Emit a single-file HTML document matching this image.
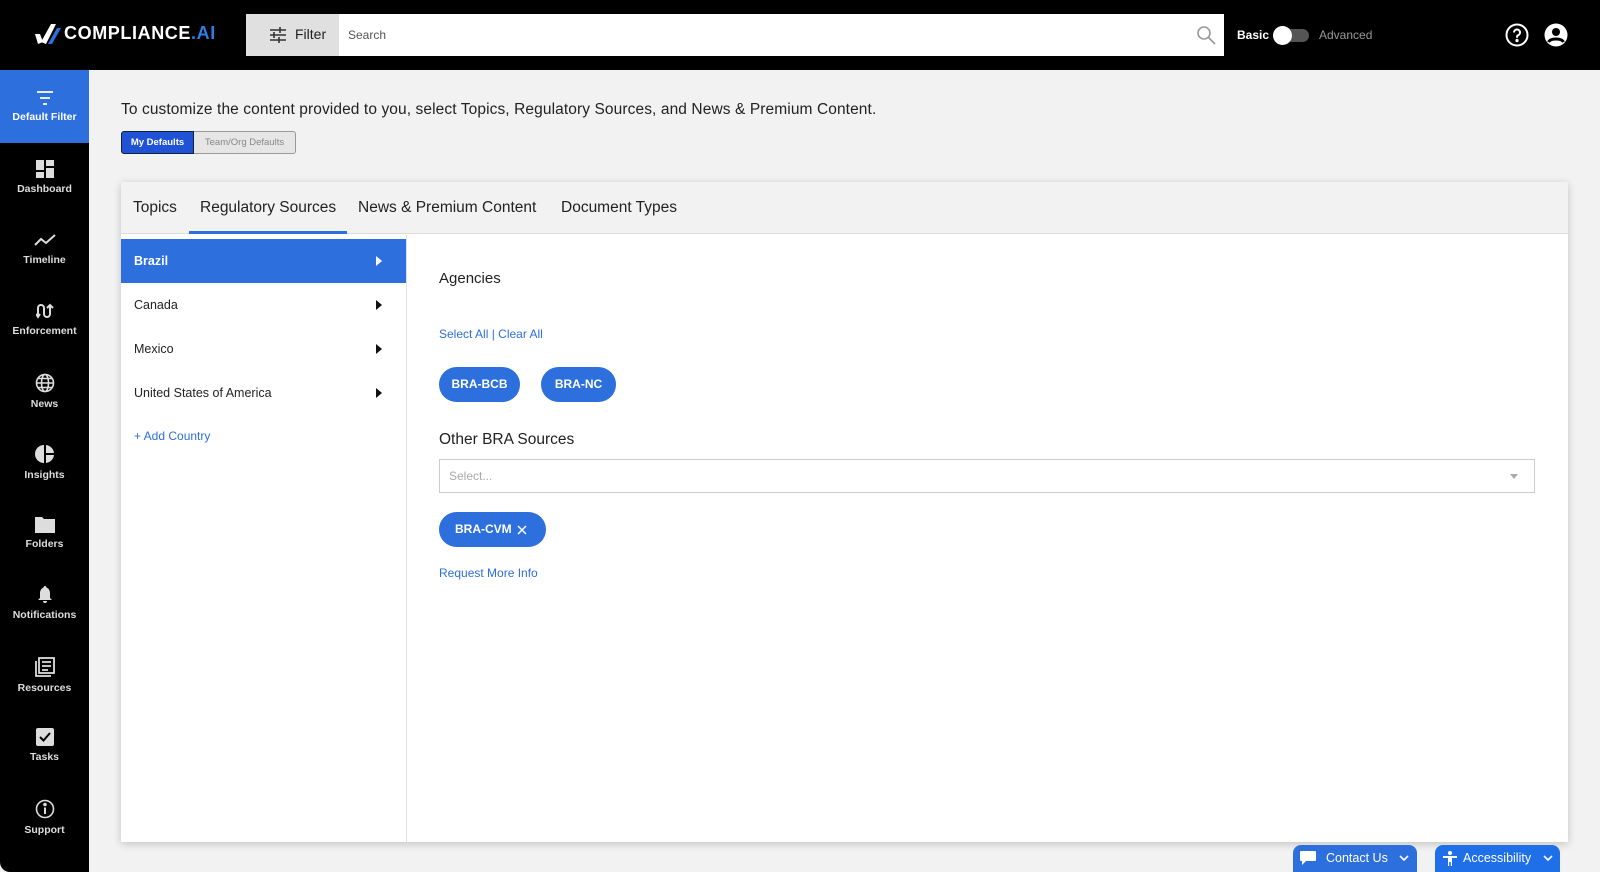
<!DOCTYPE html>
<html><head><meta charset="utf-8"><style>
*{box-sizing:border-box;margin:0;padding:0}
body{width:1600px;height:872px;overflow:hidden;background:#f2f2f2;font-family:"Liberation Sans",sans-serif;position:relative;color:#222}
.hdr{position:absolute;left:0;top:0;width:1600px;height:70px;background:#000}
.side{position:absolute;left:0;top:70px;width:89px;height:802px;background:#000;border-bottom-left-radius:10px}
.si{position:absolute;left:0;width:89px;text-align:center;color:#ddd;font-size:10.5px;font-weight:bold}
.si svg{display:block;margin:0 auto 5px}
.abs{position:absolute}
.pill{position:absolute;height:35px;border-radius:18px;background:#2c6fdd;color:#fff;font-size:12px;font-weight:bold;line-height:35px;padding:0 16px;white-space:nowrap}
.row{position:absolute;left:121px;width:285px;height:44px;font-size:12.5px;line-height:44px;padding-left:13px;color:#222}
.tri{position:absolute;right:24px;top:17px;width:0;height:0;border-left:6px solid #111;border-top:5px solid transparent;border-bottom:5px solid transparent}
.link{color:#2c6fdd;font-size:12px}
</style></head><body>
<div class="hdr">
  <svg class="abs" style="left:33px;top:22px" width="28" height="24" viewBox="0 0 28 24"><path d="M2 12 L7 12 L10 20 L5 22 Z" fill="#fff"/><path d="M8 20 L18 2 L23 2 L13 22 Z" fill="#fff"/><path d="M15 22 L24 6 L28 6 L19 22 Z" fill="#2c6fdd"/></svg>
  <div class="abs" style="left:64px;top:23px;color:#fff;font-size:18px;font-weight:bold;letter-spacing:0.6px">COMPLIANCE<span style="color:#2c7fe6">.AI</span></div>
  <div class="abs" style="left:246px;top:14px;width:93px;height:42px;background:#e0e0e0"></div>
  <svg class="abs" style="left:269px;top:27px" width="18" height="16" viewBox="0 0 18 16" stroke="#333" stroke-width="1.6"><path d="M1 3H17M1 8H17M1 13H17"/><path d="M11 0V6M5 5V11M10 10V16"/></svg>
  <div class="abs" style="left:295px;top:26px;font-size:14px;color:#222">Filter</div>
  <div class="abs" style="left:339px;top:14px;width:885px;height:42px;background:#fff"></div>
  <div class="abs" style="left:348px;top:28px;font-size:12px;color:#555">Search</div>
  <svg class="abs" style="left:1196px;top:25px" width="20" height="20" viewBox="0 0 20 20" fill="none" stroke="#999" stroke-width="1.6"><circle cx="8" cy="8" r="6"/><path d="M12.5 12.5L19 19"/></svg>
  <div class="abs" style="left:1237px;top:28px;font-size:12px;color:#fff;font-weight:bold">Basic</div>
  <div class="abs" style="left:1273px;top:29px;width:36px;height:13px;border-radius:7px;background:#555"></div>
  <div class="abs" style="left:1273px;top:26px;width:19px;height:19px;border-radius:50%;background:#fff"></div>
  <div class="abs" style="left:1319px;top:28px;font-size:12px;color:#999">Advanced</div>
  <svg class="abs" style="left:1505px;top:23px" width="24" height="24" viewBox="0 0 24 24" fill="none" stroke="#fff" stroke-width="2"><circle cx="12" cy="12" r="10.5"/><path d="M9 9.5a3 3 0 1 1 4 2.8c-.8.4-1 1-1 2v.5"/><circle cx="12" cy="17.5" r=".6" fill="#fff"/></svg>
  <svg class="abs" style="left:1544px;top:23px" width="24" height="24" viewBox="0 0 24 24"><circle cx="12" cy="12" r="11.5" fill="#fff"/><circle cx="12" cy="9" r="4" fill="#000"/><path d="M4.5 19c2-4 13-4 15 0" stroke="#000" stroke-width="3" fill="none"/></svg>
</div>
<div class="side">
  <div class="si" style="top:0;height:73px;background:#2c6fdd;color:#fff;padding-top:20px"><svg width="18" height="16" viewBox="0 0 18 16" stroke="#fff" stroke-width="1.8"><path d="M1 2H17M4 8H14M7 14H11"/></svg>Default Filter</div>
  <div class="si" style="top:90px"><svg width="18" height="18" viewBox="0 0 18 18" fill="#ddd"><rect x="0" y="0" width="8" height="10"/><rect x="10" y="0" width="8" height="6"/><rect x="0" y="12" width="8" height="6"/><rect x="10" y="8" width="8" height="10"/></svg>Dashboard</div>
  <div class="si" style="top:161px"><svg width="22" height="18" viewBox="0 0 22 18" fill="none" stroke="#ddd" stroke-width="2"><path d="M1 14L7 8L12 12L21 4"/></svg>Timeline</div>
  <div class="si" style="top:232px"><svg width="18" height="18" viewBox="0 0 18 18" fill="none" stroke="#ddd" stroke-width="2"><path d="M2 14V6a3 3 0 0 1 6 0v6a3 3 0 0 0 6 0V3M11 6l3-3 3 3M0 12l2 3 2-3"/></svg>Enforcement</div>
  <div class="si" style="top:303px"><svg width="20" height="20" viewBox="0 0 20 20" fill="none" stroke="#ddd" stroke-width="1.6"><circle cx="10" cy="10" r="8.5"/><ellipse cx="10" cy="10" rx="3.5" ry="8.5"/><path d="M1.5 10H18.5M3 5.5H17M3 14.5H17"/></svg>News</div>
  <div class="si" style="top:374px"><svg width="20" height="20" viewBox="0 0 20 20" fill="#ddd"><path d="M9 1A9 9 0 1 0 9 19Z"/><path d="M11 1A9 9 0 0 1 19 9H11Z"/><path d="M11 11H19A9 9 0 0 1 11 19Z"/></svg>Insights</div>
  <div class="si" style="top:445px"><svg width="20" height="18" viewBox="0 0 20 18" fill="#ddd"><path d="M0 2h7l2 2h11v14H0z"/></svg>Folders</div>
  <div class="si" style="top:516px"><svg width="16" height="18" viewBox="0 0 16 18" fill="#ddd"><path d="M8 0c1 0 1.5 1 1.5 1.5C12 2.5 13 5 13 7v5l2 2H1l2-2V7c0-2 1-4.5 3.5-5.5C6.5 1 7 0 8 0zM6 15h4a2 2 0 0 1-4 0z"/></svg>Notifications</div>
  <div class="si" style="top:587px"><svg width="20" height="20" viewBox="0 0 20 20" fill="none" stroke="#ddd" stroke-width="1.8"><rect x="4" y="1" width="15" height="15"/><path d="M1 4V19H16M7 5H16M7 9H16M7 13H13"/></svg>Resources</div>
  <div class="si" style="top:658px"><svg width="18" height="18" viewBox="0 0 18 18"><rect width="18" height="18" rx="2" fill="#ddd"/><path d="M4 9l3.5 3.5L14 5" stroke="#000" stroke-width="2" fill="none"/></svg>Tasks</div>
  <div class="si" style="top:729px"><svg width="20" height="20" viewBox="0 0 20 20" fill="none" stroke="#ddd" stroke-width="1.6"><circle cx="10" cy="10" r="8.5"/><path d="M10 8.5V15" stroke-width="2"/><circle cx="10" cy="5.5" r="1" fill="#ddd"/></svg>Support</div>
</div>
<div class="abs" style="left:121px;top:101px;font-size:15.5px;color:#222;letter-spacing:0.1px">To customize the content provided to you, select Topics, Regulatory Sources, and News &amp; Premium Content.</div>
<div class="abs" style="left:121px;top:131px;width:73px;height:23px;background:#1f52d6;border:1px solid #123;border-radius:3px 0 0 3px;color:#fff;font-size:9.5px;font-weight:bold;text-align:center;line-height:21px">My Defaults</div>
<div class="abs" style="left:194px;top:131px;width:102px;height:23px;background:#e6e6e6;border:1px solid #999;border-left:none;border-radius:0 3px 3px 0;color:#888;font-size:9.5px;text-align:center;line-height:21px">Team/Org Defaults</div>
<div class="abs" style="left:121px;top:182px;width:1447px;height:660px;background:#fff;box-shadow:0 2px 8px rgba(0,0,0,.2)"></div>
<div class="abs" style="left:121px;top:182px;width:1447px;height:52px;background:#f2f2f2;border-bottom:1px solid #ddd"></div>
<div class="abs" style="left:189px;top:231px;width:158px;height:3px;background:#2c6fdd"></div>
<div class="abs" style="left:133px;top:199px;font-size:15.5px">Topics</div>
<div class="abs" style="left:200px;top:199px;font-size:15.5px">Regulatory Sources</div>
<div class="abs" style="left:358px;top:199px;font-size:15.5px">News &amp; Premium Content</div>
<div class="abs" style="left:561px;top:199px;font-size:15.5px">Document Types</div>
<div class="abs" style="left:406px;top:235px;width:1px;height:607px;background:#e2e2e2"></div>
<div class="row" style="top:239px;background:#2c6fdd;color:#fff;font-weight:bold">Brazil<div class="tri" style="border-left-color:#fff"></div></div>
<div class="row" style="top:283px">Canada<div class="tri"></div></div>
<div class="row" style="top:327px">Mexico<div class="tri"></div></div>
<div class="row" style="top:371px">United States of America<div class="tri"></div></div>
<div class="abs link" style="left:134px;top:429px">+ Add Country</div>
<div class="abs" style="left:439px;top:270px;font-size:15px">Agencies</div>
<div class="abs link" style="left:439px;top:327px">Select All <span style="color:#2c6fdd">|</span> Clear All</div>
<div class="pill" style="left:439px;top:367px;width:81px;padding:0;text-align:center">BRA-BCB</div>
<div class="pill" style="left:541px;top:367px;width:75px;padding:0;text-align:center">BRA-NC</div>
<div class="abs" style="left:439px;top:431px;font-size:15.5px">Other BRA Sources</div>
<div class="abs" style="left:439px;top:459px;width:1096px;height:34px;border:1px solid #ccc;background:#fff"></div>
<div class="abs" style="left:449px;top:469px;font-size:12px;color:#aaa">Select...</div>
<div class="abs" style="left:1510px;top:474px;border-top:5px solid #aaa;border-left:4px solid transparent;border-right:4px solid transparent"></div>
<div class="pill" style="left:439px;top:512px;width:107px;padding-left:16px">BRA-CVM
  <svg class="abs" style="left:78px;top:13px" width="10" height="10" viewBox="0 0 10 10" stroke="#fff" stroke-width="1.5"><path d="M1 1L9 9M9 1L1 9"/></svg></div>
<div class="abs link" style="left:439px;top:566px">Request More Info</div>
<div class="abs" style="left:1293px;top:845px;width:124px;height:27px;background:#2c6fdd;border-radius:8px 8px 0 0;color:#fff;font-size:12.5px;line-height:27px">
  <svg class="abs" style="left:7px;top:6px" width="16" height="14" viewBox="0 0 16 14" fill="#fff"><path d="M1 0h14a1 1 0 0 1 1 1v8a1 1 0 0 1-1 1H6l-4 4v-4H1a1 1 0 0 1-1-1V1a1 1 0 0 1 1-1z"/></svg>
  <span class="abs" style="left:33px">Contact Us</span>
  <svg class="abs" style="left:106px;top:10px" width="10" height="7" viewBox="0 0 10 7" fill="none" stroke="#fff" stroke-width="1.6"><path d="M1 1l4 4 4-4"/></svg></div>
<div class="abs" style="left:1435px;top:845px;width:125px;height:27px;background:#1f6fe8;border-radius:8px 8px 0 0;color:#fff;font-size:12.5px;line-height:27px">
  <svg class="abs" style="left:8px;top:6px" width="14" height="15" viewBox="0 0 14 15" fill="#fff"><circle cx="7" cy="2" r="2"/><path d="M0 5h14v2H9v8H7.8V11H6.2v4H5V7H0z"/></svg>
  <span class="abs" style="left:28px">Accessibility</span>
  <svg class="abs" style="left:108px;top:10px" width="10" height="7" viewBox="0 0 10 7" fill="none" stroke="#fff" stroke-width="1.6"><path d="M1 1l4 4 4-4"/></svg></div>
</body></html>
